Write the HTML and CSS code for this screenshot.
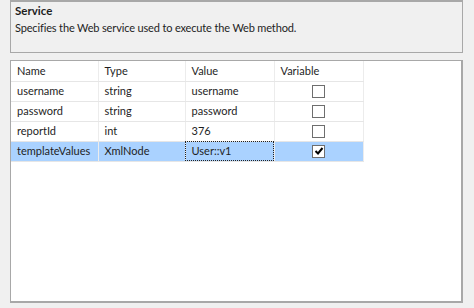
FILE: index.html
```html
<!DOCTYPE html>
<html lang="en">

<head>
    <meta charset="UTF-8">
    <title>Web Method Parameters</title>
    <link rel="stylesheet" href="styles.css">
</head>

<body>
    <div class="info-panel">
        <div class="info-title">Service</div>
        <div class="info-text">Specifies the Web service used to execute the Web method.</div>
    </div>

    <div class="grid-panel">
        <table class="param-grid">
            <tr class="head">
                <td>Name</td>
                <td>Type</td>
                <td>Value</td>
                <td>Variable</td>
            </tr>
            <tr>
                <td>username</td>
                <td>string</td>
                <td>username</td>
                <td class="check"><span class="box"></span></td>
            </tr>
            <tr>
                <td>password</td>
                <td>string</td>
                <td>password</td>
                <td class="check"><span class="box"></span></td>
            </tr>
            <tr>
                <td>reportId</td>
                <td>int</td>
                <td>376</td>
                <td class="check"><span class="box"></span></td>
            </tr>
            <tr class="selected">
                <td>templateValues</td>
                <td>XmlNode</td>
                <td class="focus">User::v1</td>
                <td class="check">
                    <span class="box">
                        <svg width="10" height="10" viewBox="0 0 10 10">
                            <path d="M1.5 5 L4 7.5 L8.5 2" fill="none" stroke="#000" stroke-width="2" />
                        </svg>
                    </span>
                </td>
            </tr>
        </table>
    </div>
</body>

</html>
```

FILE: styles.css
```css
* {
    margin: 0;
    padding: 0;
    box-sizing: border-box;
}

body {
    background: #f0f0f0;
    font-family: "Lato", "Open Sans", sans-serif;
    font-size: 11px;
    color: #1e1e1e;
    padding: 0 11px 0 10px;
    height: 308px;
    overflow: hidden;
}

.info-panel {
    height: 53px;
    border: 1px solid #a8a8a8;
    border-top-width: 2px;
    padding: 0 4px;
    background: #f0f0f0;
}

.info-title {
    font-weight: bold;
    font-size: 11.5px;
    line-height: 17px;
}

.info-text {
    line-height: 17px;
    letter-spacing: -0.15px;
}

.grid-panel {
    margin-top: 7px;
    height: 243px;
    background: #fff;
    border: 1px solid #a8a8a8;
    border-right-width: 2px;
    border-bottom-width: 2px;
}

.param-grid {
    border-collapse: collapse;
    width: 352px;
    table-layout: fixed;
}

.param-grid td {
    height: 20px;
    padding: 0 6px 1px;
    border-right: 1px solid #ececec;
    border-bottom: 1px solid #e6e6e6;
    white-space: nowrap;
}

.param-grid td:nth-child(1) { width: 87px; }
.param-grid td:nth-child(2) { width: 87px; }
.param-grid td:nth-child(3) { width: 89px; }
.param-grid td:nth-child(4) { width: 89px; }

.param-grid .head td {
    background: #fff;
}

.param-grid .selected td {
    background: #aad2ff;
}

.param-grid .selected td.focus {
    outline: 1px dotted #222;
    outline-offset: -1px;
}

.check {
    text-align: center;
}

.box {
    display: inline-flex;
    align-items: center;
    justify-content: center;
    width: 13px;
    height: 13px;
    border: 1px solid #6e6e6e;
    background: #fff;
    vertical-align: middle;
}
```
